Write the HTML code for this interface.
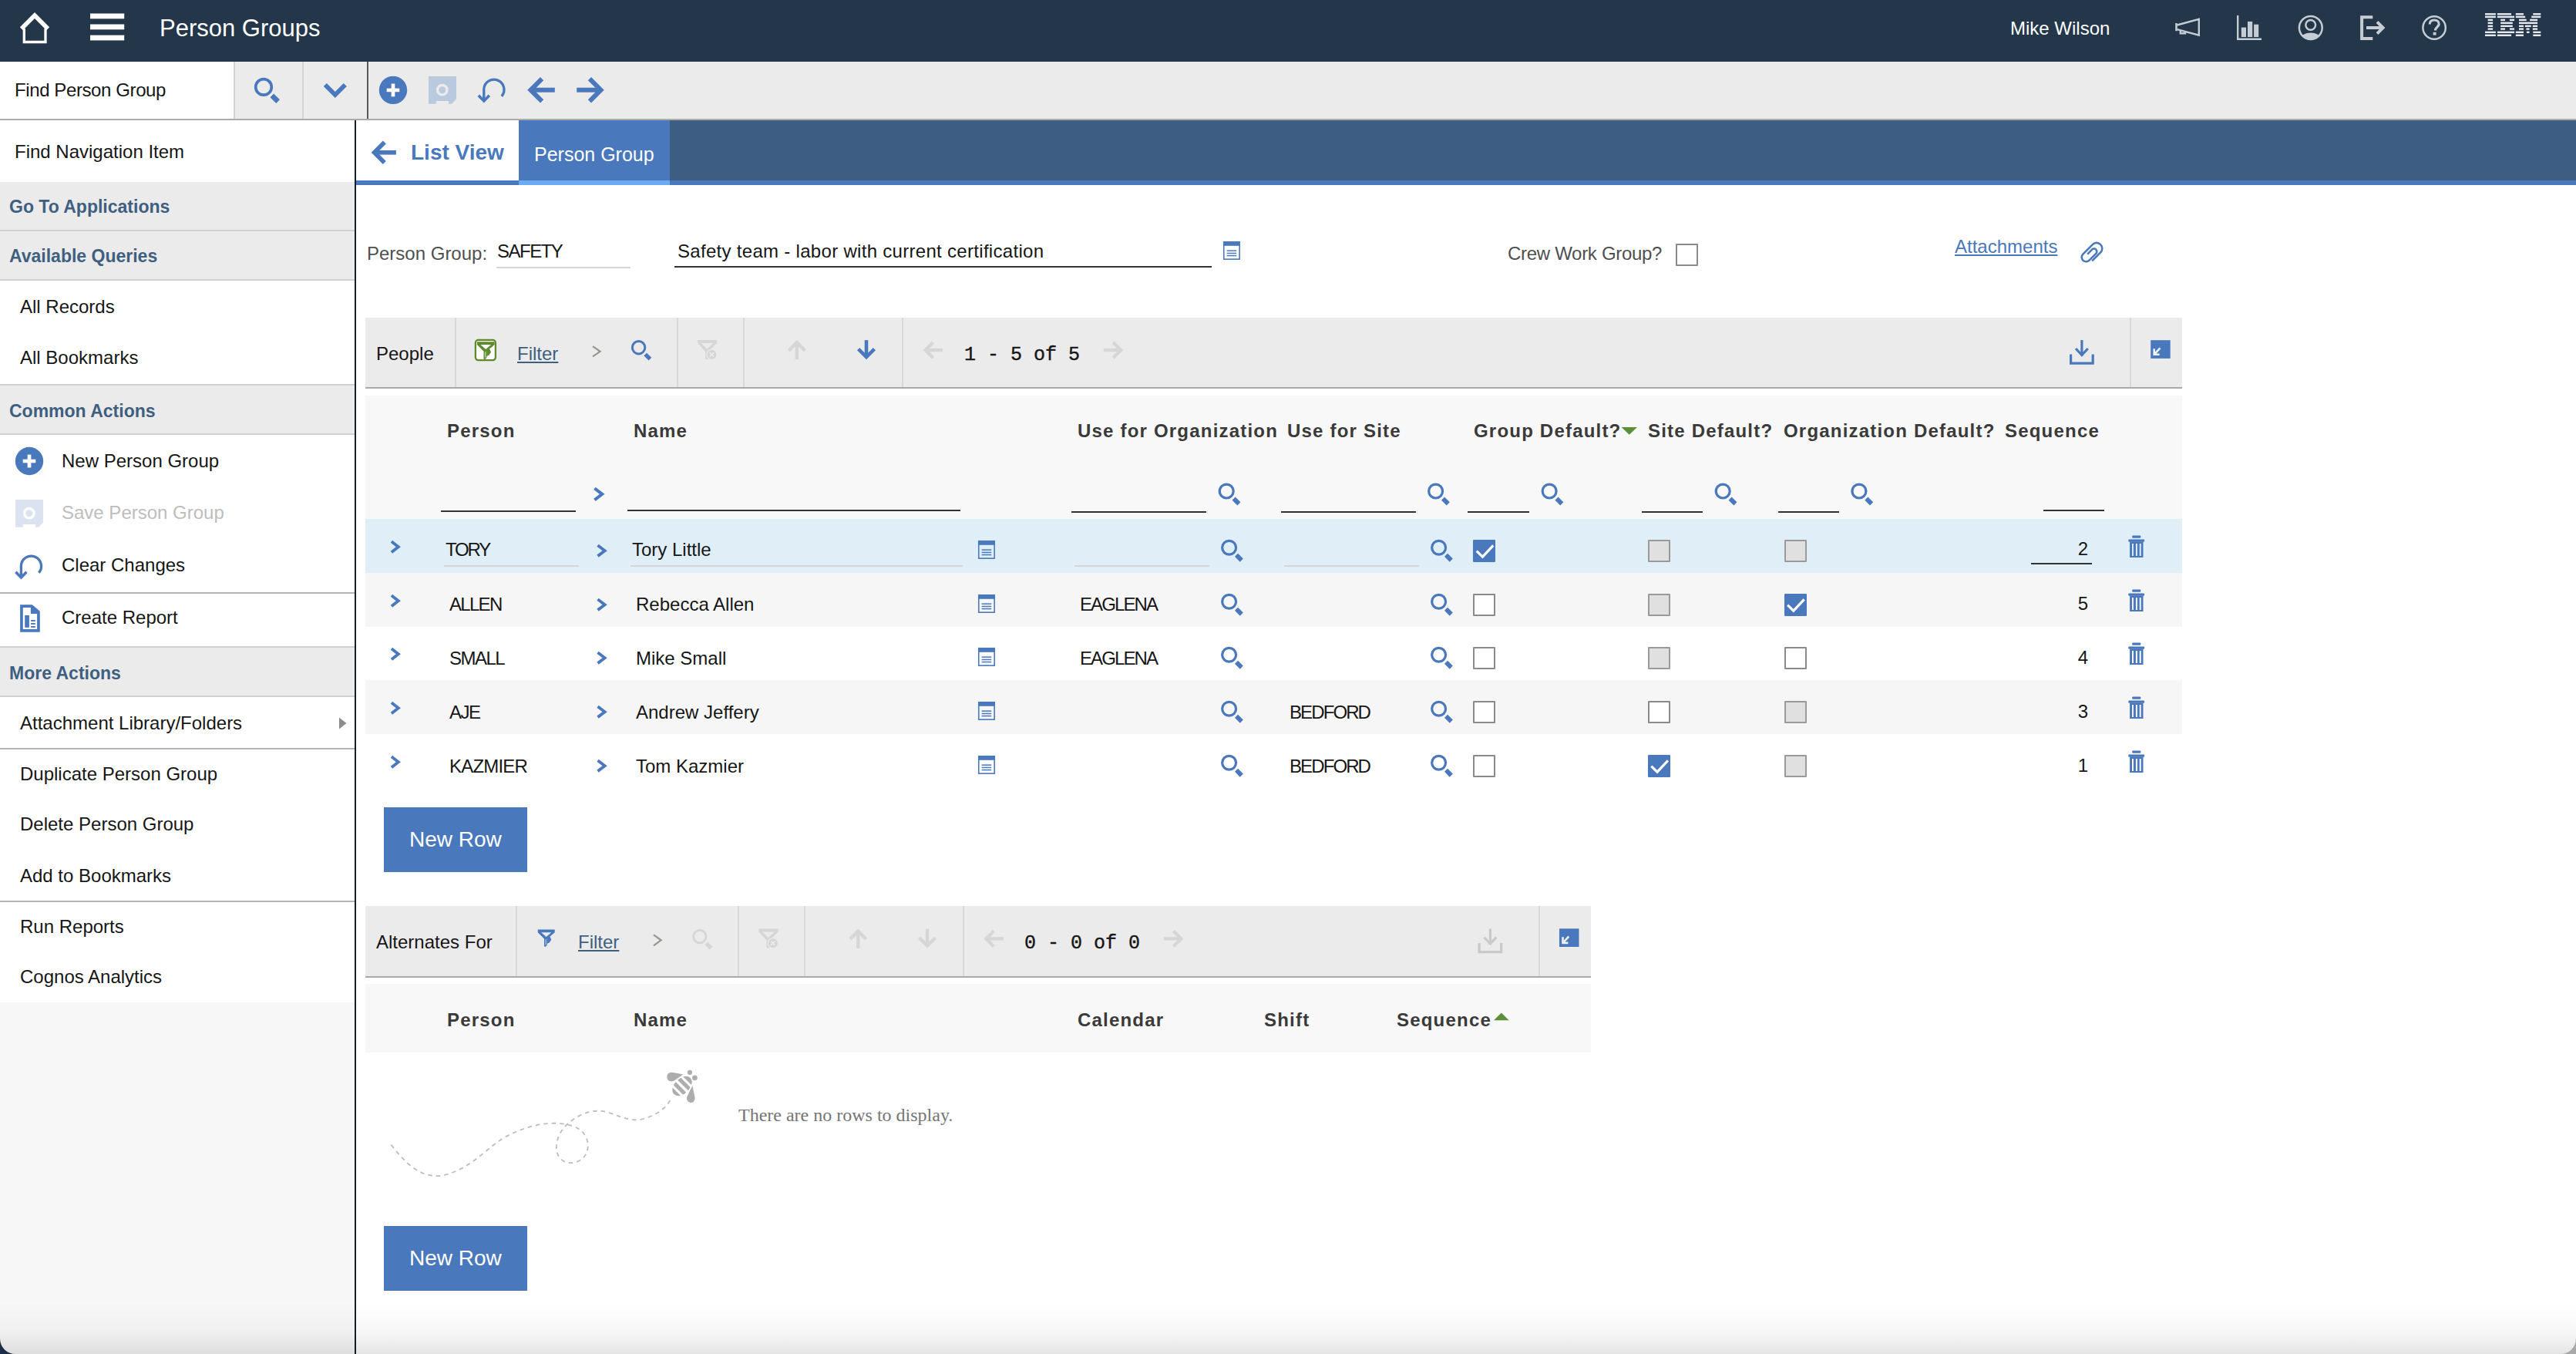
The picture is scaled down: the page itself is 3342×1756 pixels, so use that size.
<!DOCTYPE html>
<html><head><meta charset="utf-8">
<style>
html,body{margin:0;padding:0;}
body{width:3342px;height:1756px;position:relative;overflow:hidden;background:#fff;font-family:"Liberation Sans",sans-serif;}
.a{position:absolute;}
.t{position:absolute;line-height:1;white-space:nowrap;font-size:24px;color:#161616;}
.b{font-weight:700;}
.hl{font-weight:700;letter-spacing:1.2px;color:#3a3a3a;}
.sec{position:absolute;left:0;width:460px;background:#ebebeb;border-bottom:2px solid #d0d0d0;}
.sh{color:#3f5f80;font-weight:700;font-size:23px;}
.ln{position:absolute;left:0;width:460px;height:2px;background:#b4b4b4;}
.ul{position:absolute;height:2px;background:#333;}
.ulg{position:absolute;height:2px;background:#d6d6d6;}
.tb{position:absolute;background:#ebebeb;border-bottom:2px solid #a9a9a9;}
.sep{position:absolute;width:2px;background:#d8d8d8;}
.cb{position:absolute;width:25px;height:25px;border:2px solid #8a8a8a;background:#fff;border-radius:1px;}
.cbd{background:#e0e0e0;border-color:#9a9a9a;}
.cbc{background:#4a78bd;border-color:#4a78bd;}
svg{position:absolute;overflow:visible;}
.btn{position:absolute;background:#4a78bd;}
</style></head><body>

<!-- HEADER -->
<div class="a" style="left:0;top:0;width:3342px;height:80px;background:#243649;"></div>
<div class="t" style="left:207px;top:21px;font-size:31px;color:#fff;">Person Groups</div>
<div class="t" style="left:2608px;top:25px;color:#fff;">Mike Wilson</div>

<!-- TOOLBAR -->
<div class="a" style="left:0;top:80px;width:3342px;height:74px;background:#ebebeb;border-bottom:2px solid #ababab;"></div>
<div class="a" style="left:0;top:80px;width:303px;height:74px;background:#fff;"></div>
<div class="t" style="left:19px;top:105px;letter-spacing:-0.4px;">Find Person Group</div>
<div class="a" style="left:303px;top:80px;width:2px;height:74px;background:#d4d4d4;"></div>
<div class="a" style="left:392px;top:80px;width:2px;height:74px;background:#d4d4d4;"></div>
<div class="a" style="left:476px;top:80px;width:2px;height:74px;background:#5a5a5a;"></div>

<!-- SIDEBAR -->
<div class="a" style="left:0;top:156px;width:460px;height:1600px;background:#f7f7f7;"></div>
<div class="a" style="left:0;top:156px;width:460px;height:1144px;background:#fff;"></div>
<div class="a" style="left:460px;top:156px;width:2px;height:1600px;background:#102030;"></div>
<div class="t" style="left:19px;top:185px;">Find Navigation Item</div>
<div class="sec" style="top:236px;height:62px;"></div>
<div class="t sh" style="left:12px;top:257px;">Go To Applications</div>
<div class="sec" style="top:300px;height:62px;"></div>
<div class="t sh" style="left:12px;top:321px;">Available Queries</div>
<div class="t" style="left:26px;top:386px;">All Records</div>
<div class="t" style="left:26px;top:452px;">All Bookmarks</div>
<div class="sec" style="top:498px;height:62px;border-top:2px solid #d0d0d0;top:498px;"></div>
<div class="t sh" style="left:12px;top:522px;">Common Actions</div>
<div class="t" style="left:80px;top:586px;">New Person Group</div>
<div class="t" style="left:80px;top:653px;color:#bdbdbd;">Save Person Group</div>
<div class="t" style="left:80px;top:721px;">Clear Changes</div>
<div class="ln" style="top:768px;"></div>
<div class="t" style="left:80px;top:789px;">Create Report</div>
<div class="sec" style="top:838px;height:62px;border-top:2px solid #d0d0d0;"></div>
<div class="t sh" style="left:12px;top:862px;">More Actions</div>
<div class="t" style="left:26px;top:926px;">Attachment Library/Folders</div>
<div class="ln" style="top:970px;"></div>
<div class="t" style="left:26px;top:992px;">Duplicate Person Group</div>
<div class="t" style="left:26px;top:1057px;">Delete Person Group</div>
<div class="t" style="left:26px;top:1124px;">Add to Bookmarks</div>
<div class="ln" style="top:1168px;"></div>
<div class="t" style="left:26px;top:1190px;">Run Reports</div>
<div class="t" style="left:26px;top:1255px;">Cognos Analytics</div>

<!-- TAB BAR -->
<div class="a" style="left:462px;top:156px;width:2880px;height:78px;background:#3d5e82;"></div>
<div class="a" style="left:462px;top:156px;width:211px;height:78px;background:#fff;"></div>
<div class="a" style="left:673px;top:156px;width:196px;height:78px;background:#4a78bd;"></div>
<div class="a" style="left:462px;top:234px;width:2880px;height:6px;background:#4a78bd;"></div>
<div class="a" style="left:673px;top:234px;width:196px;height:6px;background:#6aabf3;"></div>
<div class="t b" style="left:533px;top:184px;font-size:28px;color:#4a78bd;">List View</div>
<div class="t" style="left:693px;top:188px;font-size:25px;color:#fff;">Person Group</div>

<!-- CONTENT -->

<!-- FORM ROW -->
<div class="t" style="left:476px;top:317px;color:#4f4f4f;">Person Group:</div>
<div class="t" style="left:645px;top:314px;letter-spacing:-1.5px;">SAFETY</div>
<div class="ulg" style="left:644px;top:346px;width:174px;"></div>
<div class="t" style="left:879px;top:314px;letter-spacing:0.3px;">Safety team - labor with current certification</div>
<div class="ul" style="left:875px;top:345px;width:697px;"></div>
<div class="t" style="left:1956px;top:317px;color:#4f4f4f;letter-spacing:-0.3px;">Crew Work Group?</div>
<div class="cb" style="left:2174px;top:316px;"></div>
<div class="t" style="left:2536px;top:308px;color:#4a78bd;text-decoration:underline;">Attachments</div>

<!-- PEOPLE TOOLBAR -->
<div class="tb" style="left:474px;top:412px;width:2357px;height:90px;"></div>
<div class="sep" style="left:590px;top:412px;height:90px;"></div>
<div class="sep" style="left:878px;top:412px;height:90px;"></div>
<div class="sep" style="left:964px;top:412px;height:90px;"></div>
<div class="sep" style="left:1170px;top:412px;height:90px;"></div>
<div class="sep" style="left:2763px;top:412px;height:90px;"></div>
<div class="t" style="left:488px;top:447px;">People</div>
<div class="t" style="left:671px;top:447px;color:#3f5f80;text-decoration:underline;">Filter</div>
<div class="t" style="left:1251px;top:448px;font-family:'Liberation Mono',monospace;font-size:25px;-webkit-text-stroke:0.4px #161616;">1 - 5 of 5</div>

<!-- PEOPLE HEADER -->
<div class="a" style="left:474px;top:513px;width:2357px;height:160px;background:#f8f8f8;"></div>
<div class="t hl" style="left:580px;top:547px;">Person</div>
<div class="t hl" style="left:822px;top:547px;">Name</div>
<div class="t hl" style="left:1398px;top:547px;">Use for Organization</div>
<div class="t hl" style="left:1670px;top:547px;">Use for Site</div>
<div class="t hl" style="left:1912px;top:547px;">Group Default?</div>
<div class="t hl" style="left:2138px;top:547px;">Site Default?</div>
<div class="t hl" style="left:2314px;top:547px;">Organization Default?</div>
<div class="t hl" style="left:2601px;top:547px;">Sequence</div>
<div class="ul" style="left:572px;top:662px;width:175px;"></div>
<div class="ul" style="left:814px;top:661px;width:432px;"></div>
<div class="ul" style="left:1390px;top:663px;width:175px;"></div>
<div class="ul" style="left:1662px;top:663px;width:175px;"></div>
<div class="ul" style="left:1904px;top:663px;width:80px;"></div>
<div class="ul" style="left:2130px;top:663px;width:79px;"></div>
<div class="ul" style="left:2307px;top:663px;width:79px;"></div>
<div class="ul" style="left:2651px;top:661px;width:79px;"></div>

<!-- ROWS -->
<div class="a" style="left:474px;top:673px;width:2357px;height:70px;background:#e0eff7;"></div>
<div class="a" style="left:474px;top:743px;width:2357px;height:70px;background:#f6f6f6;"></div>
<div class="a" style="left:474px;top:882px;width:2357px;height:70px;background:#f6f6f6;"></div>
<div class="t" style="left:578px;top:701px;letter-spacing:-2.2px;">TORY</div>
<div class="t" style="left:820px;top:701px;">Tory Little</div>
<div class="cb cbc" style="left:1911px;top:700px;"></div>
<div class="cb cbd" style="left:2138px;top:700px;"></div>
<div class="cb cbd" style="left:2315px;top:700px;"></div>
<div class="t" style="left:2600px;width:109px;text-align:right;top:700px;">2</div>
<div class="ulg" style="left:576px;top:733px;width:175px;"></div>
<div class="ulg" style="left:818px;top:733px;width:431px;"></div>
<div class="ulg" style="left:1394px;top:733px;width:175px;"></div>
<div class="ulg" style="left:1666px;top:733px;width:175px;"></div>
<div class="ul" style="left:2635px;top:730px;width:79px;"></div>
<div class="t" style="left:583px;top:772px;letter-spacing:-1.7px;">ALLEN</div>
<div class="t" style="left:825px;top:772px;">Rebecca Allen</div>
<div class="t" style="left:1401px;top:772px;letter-spacing:-1.9px;">EAGLENA</div>
<div class="cb" style="left:1911px;top:770px;"></div>
<div class="cb cbd" style="left:2138px;top:770px;"></div>
<div class="cb cbc" style="left:2315px;top:770px;"></div>
<div class="t" style="left:2600px;width:109px;text-align:right;top:771px;">5</div>
<div class="t" style="left:583px;top:842px;letter-spacing:-1.5px;">SMALL</div>
<div class="t" style="left:825px;top:842px;">Mike Small</div>
<div class="t" style="left:1401px;top:842px;letter-spacing:-1.9px;">EAGLENA</div>
<div class="cb" style="left:1911px;top:839px;"></div>
<div class="cb cbd" style="left:2138px;top:839px;"></div>
<div class="cb" style="left:2315px;top:839px;"></div>
<div class="t" style="left:2600px;width:109px;text-align:right;top:841px;">4</div>
<div class="t" style="left:583px;top:912px;letter-spacing:-1.5px;">AJE</div>
<div class="t" style="left:825px;top:912px;">Andrew Jeffery</div>
<div class="t" style="left:1673px;top:912px;letter-spacing:-1.9px;">BEDFORD</div>
<div class="cb" style="left:1911px;top:909px;"></div>
<div class="cb" style="left:2138px;top:909px;"></div>
<div class="cb cbd" style="left:2315px;top:909px;"></div>
<div class="t" style="left:2600px;width:109px;text-align:right;top:911px;">3</div>
<div class="t" style="left:583px;top:982px;letter-spacing:-0.8px;">KAZMIER</div>
<div class="t" style="left:825px;top:982px;">Tom Kazmier</div>
<div class="t" style="left:1673px;top:982px;letter-spacing:-1.9px;">BEDFORD</div>
<div class="cb" style="left:1911px;top:979px;"></div>
<div class="cb cbc" style="left:2138px;top:979px;"></div>
<div class="cb cbd" style="left:2315px;top:979px;"></div>
<div class="t" style="left:2600px;width:109px;text-align:right;top:981px;">1</div>

<div class="btn" style="left:498px;top:1047px;width:186px;height:84px;"></div>
<div class="t" style="left:531px;top:1075px;font-size:28px;color:#fff;">New Row</div>

<!-- ALTERNATES TOOLBAR -->
<div class="tb" style="left:474px;top:1175px;width:1590px;height:91px;"></div>
<div class="sep" style="left:669px;top:1175px;height:91px;"></div>
<div class="sep" style="left:957px;top:1175px;height:91px;"></div>
<div class="sep" style="left:1043px;top:1175px;height:91px;"></div>
<div class="sep" style="left:1249px;top:1175px;height:91px;"></div>
<div class="sep" style="left:1996px;top:1175px;height:91px;"></div>
<div class="t" style="left:488px;top:1210px;">Alternates For</div>
<div class="t" style="left:750px;top:1210px;color:#3f5f80;text-decoration:underline;">Filter</div>
<div class="t" style="left:1329px;top:1211px;font-family:'Liberation Mono',monospace;font-size:25px;-webkit-text-stroke:0.4px #161616;">0 - 0 of 0</div>

<!-- ALTERNATES HEADER -->
<div class="a" style="left:474px;top:1276px;width:1590px;height:89px;background:#f8f8f8;"></div>
<div class="t hl" style="left:580px;top:1311px;">Person</div>
<div class="t hl" style="left:822px;top:1311px;">Name</div>
<div class="t hl" style="left:1398px;top:1311px;">Calendar</div>
<div class="t hl" style="left:1640px;top:1311px;">Shift</div>
<div class="t hl" style="left:1812px;top:1311px;">Sequence</div>

<div class="t" style="left:958px;top:1434px;font-family:'Liberation Serif',serif;color:#757575;">There are no rows to display.</div>

<div class="btn" style="left:498px;top:1590px;width:186px;height:84px;"></div>
<div class="t" style="left:531px;top:1618px;font-size:28px;color:#fff;">New Row</div>


<!-- BOTTOM -->
<div class="a" style="left:0;top:1690px;width:3342px;height:66px;background:linear-gradient(to bottom,rgba(0,0,0,0),rgba(0,0,0,0.035) 60%,rgba(0,0,0,0.1));"></div>
<svg class="a" style="left:0;top:1726px" width="30" height="30" viewBox="0 0 30 30"><path d="M0,10 A20,20 0 0 0 20,30 H0 Z" fill="#1b2f4a"/></svg>
<svg class="a" style="left:3312px;top:1726px" width="30" height="30" viewBox="0 0 30 30"><path d="M30,10 A20,20 0 0 1 10,30 H30 Z" fill="#a9a9a9"/></svg>
<!-- ICONS --><svg class="a" style="left:0;top:0" width="3342" height="1756" viewBox="0 0 3342 1756"><g fill="none" stroke="#fff"><polyline points="27.8,37.2 45,20 62.2,37.2" stroke-width="5.6" stroke-linejoin="miter"/><path d="M31.3,37 V54.5 H59 V37" stroke-width="3.3"/></g>
<g fill="#fff"><rect x="117" y="17.5" width="44.2" height="6.8"/><rect x="117" y="31.5" width="44.2" height="6.8"/><rect x="117" y="45.6" width="44.2" height="6.8"/></g>
<g fill="none" stroke="#c6ccd4" stroke-width="2.4"><rect x="2822.2" y="30" width="2.6" height="10.2" fill="#c6ccd4" stroke="none"/><path d="M2824.5,32.5 L2852.8,24.8 V45.6 L2824.5,38.2"/><path d="M2828.8,39.5 V43.2 H2835 V41"/></g>
<g fill="#c6ccd4"><path d="M2903.2,20 V50.8 H2934" fill="none" stroke="#c6ccd4" stroke-width="2.4"/><rect x="2907.8" y="35.6" width="6.2" height="12.4"/><rect x="2916" y="27.9" width="6.2" height="20.1"/><rect x="2924.1" y="31.7" width="6.1" height="16.3"/></g>
<defs><clipPath id="uc"><circle cx="2997.8" cy="36" r="14.5"/></clipPath></defs><g fill="none" stroke="#c6ccd4" stroke-width="2.5"><circle cx="2997.8" cy="36" r="14.9"/><circle cx="2997.7" cy="32.3" r="6.4"/></g><ellipse cx="2997.8" cy="50" rx="13" ry="7.6" fill="#c6ccd4" clip-path="url(#uc)"/>
<g fill="none" stroke="#c6ccd4" stroke-width="4"><path d="M3078.3,22.2 H3064.1 V49.9 H3078.3"/><path d="M3070,36 H3091"/><polyline points="3084,28.3 3091.6,36 3084,43.7" stroke-linejoin="miter"/></g>
<circle cx="3158.1" cy="36" r="14.7" fill="none" stroke="#c6ccd4" stroke-width="2.5"/><path d="M3152.2,31.5 C3152.2,27.8 3154.8,26 3158.2,26 C3161.8,26 3164.2,28.2 3164.2,31.2 C3164.2,34.6 3159.4,35.4 3159.4,39.6" fill="none" stroke="#c6ccd4" stroke-width="3.2"/><rect x="3156.6" y="41.8" width="4" height="3.8" fill="#c6ccd4"/>
<g fill="#e6e9ed"><rect x="3224.0" y="17.1" width="13.9" height="2.4"/><rect x="3239.9" y="17.1" width="18.1" height="2.4"/><rect x="3263.8" y="17.1" width="10.2" height="2.4"/><rect x="3286.3" y="17.1" width="10.0" height="2.4"/><rect x="3224.0" y="20.7" width="13.9" height="2.4"/><rect x="3239.9" y="20.7" width="22.1" height="2.4"/><rect x="3263.8" y="20.7" width="12.3" height="2.4"/><rect x="3284.2" y="20.7" width="12.1" height="2.4"/><rect x="3227.6" y="24.7" width="6.5" height="2.4"/><rect x="3244.2" y="24.7" width="5.8" height="2.4"/><rect x="3255.9" y="24.7" width="6.1" height="2.4"/><rect x="3268.0" y="24.7" width="9.7" height="2.4"/><rect x="3282.1" y="24.7" width="10.0" height="2.4"/><rect x="3227.6" y="28.6" width="6.5" height="2.4"/><rect x="3244.2" y="28.6" width="15.6" height="2.4"/><rect x="3268.0" y="28.6" width="24.1" height="2.4"/><rect x="3227.6" y="32.6" width="6.5" height="2.4"/><rect x="3244.2" y="32.6" width="15.6" height="2.4"/><rect x="3268.0" y="32.6" width="6.0" height="2.4"/><rect x="3275.8" y="32.6" width="7.9" height="2.4"/><rect x="3285.8" y="32.6" width="6.3" height="2.4"/><rect x="3227.6" y="36.4" width="6.5" height="2.4"/><rect x="3244.2" y="36.4" width="5.8" height="2.4"/><rect x="3255.9" y="36.4" width="6.1" height="2.4"/><rect x="3268.0" y="36.4" width="6.0" height="2.4"/><rect x="3277.4" y="36.4" width="4.2" height="2.4"/><rect x="3285.8" y="36.4" width="6.3" height="2.4"/><rect x="3224.0" y="40.6" width="13.9" height="2.4"/><rect x="3239.9" y="40.6" width="22.1" height="2.4"/><rect x="3263.8" y="40.6" width="10.2" height="2.4"/><rect x="3277.9" y="40.6" width="3.7" height="2.4"/><rect x="3286.3" y="40.6" width="10.0" height="2.4"/><rect x="3224.0" y="44.6" width="13.9" height="2.4"/><rect x="3239.9" y="44.6" width="18.1" height="2.4"/><rect x="3263.8" y="44.6" width="10.2" height="2.4"/><rect x="3286.3" y="44.6" width="10.0" height="2.4"/></g>
<g transform="translate(329.8,100.9) scale(1.0)" fill="none" stroke="#4a78bd"><circle cx="12.2" cy="12" r="10.3" stroke-width="3.7"/><line x1="23" y1="23" x2="30.8" y2="30.8" stroke-width="6.6"/></g>
<polyline points="421.8,110 434.8,123 447.8,110" fill="none" stroke="#4a78bd" stroke-width="5.8"/>
<circle cx="510" cy="116.9" r="18.2" fill="#4a78bd"/><rect x="501.7" y="114.60000000000001" width="16.6" height="4.6" fill="#fff"/><rect x="507.65" y="108.5" width="4.7" height="16.8" fill="#fff"/>
<path d="M556,99 H592 V128.5 L586,134.7 H582 V131 H565.7 V134.7 H556 Z" fill="#bacade"/><circle cx="573.8" cy="116.7" r="6.2" fill="none" stroke="#ebebeb" stroke-width="3.4"/>
<g transform="translate(620,100)" fill="none" stroke="#4a78bd" stroke-width="3.3"><path d="M30.8,24.8 A13.1,13.1 0 1 0 7.8,15.5 V31"/><polyline points="0.8,23.8 7.8,31 14.8,23.8" stroke-width="3.6"/></g>
<g fill="none" stroke="#4a78bd" stroke-width="6"><line x1="688.5" y1="116.7" x2="719.8" y2="116.7"/><polyline points="703.1,102.10000000000001 688.5,116.7 703.1,131.3"/></g>
<g fill="none" stroke="#4a78bd" stroke-width="6"><line x1="748.2" y1="116.7" x2="779.5" y2="116.7"/><polyline points="764.9,102.10000000000001 779.5,116.7 764.9,131.3"/></g>
<g fill="none" stroke="#4a78bd" stroke-width="5.6"><line x1="485.62" y1="197.8" x2="513.9" y2="197.8"/><polyline points="498.82,184.60000000000002 485.62,197.8 498.82,211.0"/></g>
<circle cx="38" cy="598" r="18.2" fill="#4a78bd"/><rect x="29.7" y="595.7" width="16.6" height="4.6" fill="#fff"/><rect x="35.65" y="589.6" width="4.7" height="16.8" fill="#fff"/>
<path d="M20,648 H56 V677.5 L50,683.7 H46 V680 H29.7 V683.7 H20 Z" fill="#dae3ef"/><circle cx="37.8" cy="665.7" r="6.2" fill="none" stroke="#fff" stroke-width="3.4"/>
<g transform="translate(19.6,718)" fill="none" stroke="#4a78bd" stroke-width="3.3"><path d="M30.8,24.8 A13.1,13.1 0 1 0 7.8,15.5 V31"/><polyline points="0.8,23.8 7.8,31 14.8,23.8" stroke-width="3.6"/></g>
<g fill="#4a78bd"><path d="M26.1,784.2 H41.8 L51.8,792.7 V819.7 H26.1 Z M29.8,788 V816 H48.1 V796 H39.9 V788 Z" fill-rule="evenodd"/><rect x="32.2" y="798" width="5.7" height="15.8"/><rect x="40.1" y="804" width="5.7" height="1.9"/><rect x="40.1" y="808" width="5.7" height="1.9"/><rect x="40.1" y="812" width="5.7" height="1.9"/></g>
<polygon points="440,930.5 449.5,938 440,945.5" fill="#8c8c8c"/>
<g transform="translate(1587,313)"><rect x="0.75" y="0.75" width="20.4" height="22.4" fill="none" stroke="#4a78bd" stroke-width="1.6"/><rect x="0" y="0" width="21.9" height="5.8" fill="#4a78bd"/><g fill="#4a78bd"><rect x="4.6" y="11.4" width="12.6" height="1.5"/><rect x="4.6" y="14.7" width="12.6" height="1.5"/><rect x="4.6" y="17.8" width="12.6" height="1.5"/></g></g>
<path d="M7,15 V0 A7,7 0 0 0 -7,0 V17 A5.5,5.5 0 0 0 4,17 V5 A3.5,3.5 0 0 0 -3,5 V13" fill="none" stroke="#4a78bd" stroke-width="2.5" transform="translate(2720,322.2) rotate(45) scale(1.04)"/>
<rect x="616.9" y="440.9" width="26" height="26.3" rx="3.6" fill="#fff" stroke="#5e8c2c" stroke-width="2.3"/>
<g transform="translate(618.9,443.2) scale(1.03)" fill="#5e8c2c"><path d="M0,0 H22 V3.6 L12,12.2 V20.5 L9.6,22.4 L8.3,21.6 V12 L0,3.6 Z M4.4,3.6 L11,9.4 L17.6,3.6 Z" fill-rule="evenodd"/><rect x="9.7" y="12.6" width="1.1" height="7.2" fill="#fff" opacity="0.7"/><path d="M12,10.6 L15.6,8.8 L17.6,13.2 L15.2,16.6 L12,18.4 Z"/></g>
<polyline points="769,449.2 778.6,455.8 769,462.4" fill="none" stroke="#96968a" stroke-width="2.2"/>
<g transform="translate(818.8,441.1) scale(0.8)" fill="none" stroke="#4a78bd"><circle cx="12.2" cy="12" r="10.3" stroke-width="3.7"/><line x1="23" y1="23" x2="30.8" y2="30.8" stroke-width="6.6"/></g>
<g transform="translate(905.1,441.1)"><path d="M0,0 H25 V4 L14,15 V25 L10,25 V15 L0,4 Z M4.5,4 L12,11.5 L20.5,4 Z" fill="#d6d6d6" fill-rule="evenodd"/><circle cx="18.3" cy="18.7" r="6.6" fill="#d6d6d6" stroke="#ebebeb" stroke-width="1.2"/><path d="M15.6,16 L21,21.4 M21,16 L15.6,21.4" stroke="#ebebeb" stroke-width="1.6"/></g>
<g fill="none" stroke="#d6d6d6" stroke-width="4.4"><line x1="1033.8" y1="444.18" x2="1033.8" y2="466.3"/><polyline points="1023.4,454.58 1033.8,444.18 1044.2,454.58"/></g>
<g fill="none" stroke="#4a78bd" stroke-width="4.6"><line x1="1124" y1="441.1" x2="1124" y2="463.08"/><polyline points="1113.6,452.68 1124,463.08 1134.4,452.68"/></g>
<g fill="none" stroke="#d6d6d6" stroke-width="4.3"><line x1="1200.51" y1="454" x2="1222.9" y2="454"/><polyline points="1210.51,444 1200.51,454 1210.51,464"/></g>
<g fill="none" stroke="#d6d6d6" stroke-width="4.3"><line x1="1431.8" y1="454" x2="1454.19" y2="454"/><polyline points="1444.19,444 1454.19,454 1444.19,464"/></g>
<g transform="translate(2685,441)" fill="none" stroke="#4a78bd" stroke-width="3.2"><path d="M1.6,18.5 V30.2 H30.2 V18.5"/><line x1="15.9" y1="0" x2="15.9" y2="20.5"/><polyline points="8,11 15.9,19.5 23.8,11"/></g>
<rect x="2790.2" y="441.2" width="25.5" height="23.7" fill="#4a78bd"/><g fill="none" stroke="#eef1f6" stroke-width="2.6"><path d="M2794.7,452.2 V459.8 H2801.6"/><line x1="2795.0" y1="459.5" x2="2802.3999999999996" y2="451.4"/></g>
<polygon points="2103.6,554 2124,554 2113.8,563.7" fill="#5b8f3a"/>
<polyline points="771.4,633.4 781.2,640.85 771.4,648.3000000000001" fill="none" stroke="#4a78bd" stroke-width="4"/>
<g transform="translate(1580.6,626.6) scale(0.87)" fill="none" stroke="#4a78bd"><circle cx="12.2" cy="12" r="10.3" stroke-width="3.7"/><line x1="23" y1="23" x2="30.8" y2="30.8" stroke-width="6.6"/></g>
<g transform="translate(1852,626.6) scale(0.87)" fill="none" stroke="#4a78bd"><circle cx="12.2" cy="12" r="10.3" stroke-width="3.7"/><line x1="23" y1="23" x2="30.8" y2="30.8" stroke-width="6.6"/></g>
<g transform="translate(1999.5,626.6) scale(0.87)" fill="none" stroke="#4a78bd"><circle cx="12.2" cy="12" r="10.3" stroke-width="3.7"/><line x1="23" y1="23" x2="30.8" y2="30.8" stroke-width="6.6"/></g>
<g transform="translate(2224.6,626.6) scale(0.87)" fill="none" stroke="#4a78bd"><circle cx="12.2" cy="12" r="10.3" stroke-width="3.7"/><line x1="23" y1="23" x2="30.8" y2="30.8" stroke-width="6.6"/></g>
<g transform="translate(2401.3,626.6) scale(0.87)" fill="none" stroke="#4a78bd"><circle cx="12.2" cy="12" r="10.3" stroke-width="3.7"/><line x1="23" y1="23" x2="30.8" y2="30.8" stroke-width="6.6"/></g>
<polyline points="507.9,702.28 516.84,709.3 507.9,716.32" fill="none" stroke="#4a78bd" stroke-width="3.8"/>
<polyline points="775.5,707.28 784.6400000000001,714.2 775.5,721.12" fill="none" stroke="#4a78bd" stroke-width="3.8"/>
<g transform="translate(1269,701)"><rect x="0.75" y="0.75" width="20.4" height="22.4" fill="none" stroke="#4a78bd" stroke-width="1.6"/><rect x="0" y="0" width="21.9" height="5.8" fill="#4a78bd"/><g fill="#4a78bd"><rect x="4.6" y="11.4" width="12.6" height="1.5"/><rect x="4.6" y="14.7" width="12.6" height="1.5"/><rect x="4.6" y="17.8" width="12.6" height="1.5"/></g></g>
<g transform="translate(1584,699.8) scale(0.87)" fill="none" stroke="#4a78bd"><circle cx="12.2" cy="12" r="10.3" stroke-width="3.7"/><line x1="23" y1="23" x2="30.8" y2="30.8" stroke-width="6.6"/></g>
<g transform="translate(1856,699.8) scale(0.87)" fill="none" stroke="#4a78bd"><circle cx="12.2" cy="12" r="10.3" stroke-width="3.7"/><line x1="23" y1="23" x2="30.8" y2="30.8" stroke-width="6.6"/></g>
<g fill="#4a78bd" transform="translate(2761.3,694.4)"><rect x="4.9" y="0" width="11.1" height="3.3" rx="1"/><rect x="0" y="5" width="20.8" height="3.3" rx="1"/><path d="M1.8,8 H19.2 V28.6 H1.8 Z M4.7,10.6 V26.5 H6.6 V10.6 Z M9.6,10.6 V26.5 H11.6 V10.6 Z M14.4,10.6 V26.5 H16.4 V10.6 Z" fill-rule="evenodd"/></g>
<polyline points="507.9,772.28 516.84,779.3 507.9,786.32" fill="none" stroke="#4a78bd" stroke-width="3.8"/>
<polyline points="775.5,777.28 784.6400000000001,784.2 775.5,791.12" fill="none" stroke="#4a78bd" stroke-width="3.8"/>
<g transform="translate(1269,771)"><rect x="0.75" y="0.75" width="20.4" height="22.4" fill="none" stroke="#4a78bd" stroke-width="1.6"/><rect x="0" y="0" width="21.9" height="5.8" fill="#4a78bd"/><g fill="#4a78bd"><rect x="4.6" y="11.4" width="12.6" height="1.5"/><rect x="4.6" y="14.7" width="12.6" height="1.5"/><rect x="4.6" y="17.8" width="12.6" height="1.5"/></g></g>
<g transform="translate(1584,769.8) scale(0.87)" fill="none" stroke="#4a78bd"><circle cx="12.2" cy="12" r="10.3" stroke-width="3.7"/><line x1="23" y1="23" x2="30.8" y2="30.8" stroke-width="6.6"/></g>
<g transform="translate(1856,769.8) scale(0.87)" fill="none" stroke="#4a78bd"><circle cx="12.2" cy="12" r="10.3" stroke-width="3.7"/><line x1="23" y1="23" x2="30.8" y2="30.8" stroke-width="6.6"/></g>
<g fill="#4a78bd" transform="translate(2761.3,764.4)"><rect x="4.9" y="0" width="11.1" height="3.3" rx="1"/><rect x="0" y="5" width="20.8" height="3.3" rx="1"/><path d="M1.8,8 H19.2 V28.6 H1.8 Z M4.7,10.6 V26.5 H6.6 V10.6 Z M9.6,10.6 V26.5 H11.6 V10.6 Z M14.4,10.6 V26.5 H16.4 V10.6 Z" fill-rule="evenodd"/></g>
<polyline points="507.9,841.28 516.84,848.3 507.9,855.32" fill="none" stroke="#4a78bd" stroke-width="3.8"/>
<polyline points="775.5,846.28 784.6400000000001,853.2 775.5,860.12" fill="none" stroke="#4a78bd" stroke-width="3.8"/>
<g transform="translate(1269,840)"><rect x="0.75" y="0.75" width="20.4" height="22.4" fill="none" stroke="#4a78bd" stroke-width="1.6"/><rect x="0" y="0" width="21.9" height="5.8" fill="#4a78bd"/><g fill="#4a78bd"><rect x="4.6" y="11.4" width="12.6" height="1.5"/><rect x="4.6" y="14.7" width="12.6" height="1.5"/><rect x="4.6" y="17.8" width="12.6" height="1.5"/></g></g>
<g transform="translate(1584,838.8) scale(0.87)" fill="none" stroke="#4a78bd"><circle cx="12.2" cy="12" r="10.3" stroke-width="3.7"/><line x1="23" y1="23" x2="30.8" y2="30.8" stroke-width="6.6"/></g>
<g transform="translate(1856,838.8) scale(0.87)" fill="none" stroke="#4a78bd"><circle cx="12.2" cy="12" r="10.3" stroke-width="3.7"/><line x1="23" y1="23" x2="30.8" y2="30.8" stroke-width="6.6"/></g>
<g fill="#4a78bd" transform="translate(2761.3,833.4)"><rect x="4.9" y="0" width="11.1" height="3.3" rx="1"/><rect x="0" y="5" width="20.8" height="3.3" rx="1"/><path d="M1.8,8 H19.2 V28.6 H1.8 Z M4.7,10.6 V26.5 H6.6 V10.6 Z M9.6,10.6 V26.5 H11.6 V10.6 Z M14.4,10.6 V26.5 H16.4 V10.6 Z" fill-rule="evenodd"/></g>
<polyline points="507.9,911.28 516.84,918.3 507.9,925.32" fill="none" stroke="#4a78bd" stroke-width="3.8"/>
<polyline points="775.5,916.28 784.6400000000001,923.2 775.5,930.12" fill="none" stroke="#4a78bd" stroke-width="3.8"/>
<g transform="translate(1269,910)"><rect x="0.75" y="0.75" width="20.4" height="22.4" fill="none" stroke="#4a78bd" stroke-width="1.6"/><rect x="0" y="0" width="21.9" height="5.8" fill="#4a78bd"/><g fill="#4a78bd"><rect x="4.6" y="11.4" width="12.6" height="1.5"/><rect x="4.6" y="14.7" width="12.6" height="1.5"/><rect x="4.6" y="17.8" width="12.6" height="1.5"/></g></g>
<g transform="translate(1584,908.8) scale(0.87)" fill="none" stroke="#4a78bd"><circle cx="12.2" cy="12" r="10.3" stroke-width="3.7"/><line x1="23" y1="23" x2="30.8" y2="30.8" stroke-width="6.6"/></g>
<g transform="translate(1856,908.8) scale(0.87)" fill="none" stroke="#4a78bd"><circle cx="12.2" cy="12" r="10.3" stroke-width="3.7"/><line x1="23" y1="23" x2="30.8" y2="30.8" stroke-width="6.6"/></g>
<g fill="#4a78bd" transform="translate(2761.3,903.4)"><rect x="4.9" y="0" width="11.1" height="3.3" rx="1"/><rect x="0" y="5" width="20.8" height="3.3" rx="1"/><path d="M1.8,8 H19.2 V28.6 H1.8 Z M4.7,10.6 V26.5 H6.6 V10.6 Z M9.6,10.6 V26.5 H11.6 V10.6 Z M14.4,10.6 V26.5 H16.4 V10.6 Z" fill-rule="evenodd"/></g>
<polyline points="507.9,981.28 516.84,988.3 507.9,995.32" fill="none" stroke="#4a78bd" stroke-width="3.8"/>
<polyline points="775.5,986.28 784.6400000000001,993.2 775.5,1000.12" fill="none" stroke="#4a78bd" stroke-width="3.8"/>
<g transform="translate(1269,980)"><rect x="0.75" y="0.75" width="20.4" height="22.4" fill="none" stroke="#4a78bd" stroke-width="1.6"/><rect x="0" y="0" width="21.9" height="5.8" fill="#4a78bd"/><g fill="#4a78bd"><rect x="4.6" y="11.4" width="12.6" height="1.5"/><rect x="4.6" y="14.7" width="12.6" height="1.5"/><rect x="4.6" y="17.8" width="12.6" height="1.5"/></g></g>
<g transform="translate(1584,978.8) scale(0.87)" fill="none" stroke="#4a78bd"><circle cx="12.2" cy="12" r="10.3" stroke-width="3.7"/><line x1="23" y1="23" x2="30.8" y2="30.8" stroke-width="6.6"/></g>
<g transform="translate(1856,978.8) scale(0.87)" fill="none" stroke="#4a78bd"><circle cx="12.2" cy="12" r="10.3" stroke-width="3.7"/><line x1="23" y1="23" x2="30.8" y2="30.8" stroke-width="6.6"/></g>
<g fill="#4a78bd" transform="translate(2761.3,973.4)"><rect x="4.9" y="0" width="11.1" height="3.3" rx="1"/><rect x="0" y="5" width="20.8" height="3.3" rx="1"/><path d="M1.8,8 H19.2 V28.6 H1.8 Z M4.7,10.6 V26.5 H6.6 V10.6 Z M9.6,10.6 V26.5 H11.6 V10.6 Z M14.4,10.6 V26.5 H16.4 V10.6 Z" fill-rule="evenodd"/></g>
<polyline points="1915.6999999999998,714.6 1923.3999999999999,722.1 1937.3,707.4000000000001" fill="none" stroke="#fff" stroke-width="3.2"/>
<polyline points="2319.1,784.6 2326.8,792.1 2340.7,777.4000000000001" fill="none" stroke="#fff" stroke-width="3.2"/>
<polyline points="2142.2999999999997,993.6 2150.0,1001.1 2163.8999999999996,986.4000000000001" fill="none" stroke="#fff" stroke-width="3.2"/>
<g transform="translate(697.7,1205.6) scale(1.0)" fill="#4a78bd"><path d="M0,0 H22 V3.6 L12,12.2 V20.5 L9.6,22.4 L8.3,21.6 V12 L0,3.6 Z M4.4,3.6 L11,9.4 L17.6,3.6 Z" fill-rule="evenodd"/><rect x="9.7" y="12.6" width="1.1" height="7.2" fill="#ebebeb" opacity="0.7"/><path d="M12,10.6 L15.6,8.8 L17.6,13.2 L15.2,16.6 L12,18.4 Z"/></g>
<polyline points="848,1212.3 857.6,1219.3 848,1226.3" fill="none" stroke="#96968a" stroke-width="2.2"/>
<g transform="translate(898,1205) scale(0.8)" fill="none" stroke="#d6d6d6"><circle cx="12.2" cy="12" r="10.3" stroke-width="3.7"/><line x1="23" y1="23" x2="30.8" y2="30.8" stroke-width="6.6"/></g>
<g transform="translate(984.5,1204.5)"><path d="M0,0 H25 V4 L14,15 V25 L10,25 V15 L0,4 Z M4.5,4 L12,11.5 L20.5,4 Z" fill="#d6d6d6" fill-rule="evenodd"/><circle cx="18.3" cy="18.7" r="6.6" fill="#d6d6d6" stroke="#ebebeb" stroke-width="1.2"/><path d="M15.6,16 L21,21.4 M21,16 L15.6,21.4" stroke="#ebebeb" stroke-width="1.6"/></g>
<g fill="none" stroke="#d6d6d6" stroke-width="4.4"><line x1="1113.3" y1="1207.58" x2="1113.3" y2="1229.7"/><polyline points="1102.8999999999999,1217.98 1113.3,1207.58 1123.7,1217.98"/></g>
<g fill="none" stroke="#d6d6d6" stroke-width="4.4"><line x1="1203" y1="1204.5" x2="1203" y2="1226.6200000000001"/><polyline points="1192.6,1216.22 1203,1226.6200000000001 1213.4,1216.22"/></g>
<g fill="none" stroke="#d6d6d6" stroke-width="4.3"><line x1="1279.41" y1="1217.4" x2="1302.0" y2="1217.4"/><polyline points="1289.41,1207.4 1279.41,1217.4 1289.41,1227.4"/></g>
<g fill="none" stroke="#d6d6d6" stroke-width="4.3"><line x1="1509.8000000000002" y1="1217.4" x2="1532.39" y2="1217.4"/><polyline points="1522.39,1207.4 1532.39,1217.4 1522.39,1227.4"/></g>
<g transform="translate(1917.5,1204.5)" fill="none" stroke="#c9c9c9" stroke-width="3.2"><path d="M1.6,18.5 V30.2 H30.2 V18.5"/><line x1="15.9" y1="0" x2="15.9" y2="20.5"/><polyline points="8,11 15.9,19.5 23.8,11"/></g>
<rect x="2023" y="1204.3" width="25.5" height="23.7" fill="#4a78bd"/><g fill="none" stroke="#eef1f6" stroke-width="2.6"><path d="M2027.5,1215.3 V1222.8999999999999 H2034.4"/><line x1="2027.8" y1="1222.6" x2="2035.2" y2="1214.5"/></g>
<polygon points="1938,1323.3 1957.7,1323.3 1947.8,1313.4" fill="#5b8f3a"/>
<path d="M507.5,1484.5 C525,1508 545,1527 570,1525 C605,1520 625,1495 650,1478 C675,1462 715,1450 745,1461 C770,1471 768,1505 743,1508 C718,1510 715,1478 735,1459 C752,1443 772,1437 790,1443 C810,1450 822,1455 835,1451 C852,1446 865,1437 871,1424" fill="none" stroke="#bdbdbd" stroke-width="1.8" stroke-dasharray="5.5,5"/>
<g transform="translate(885,1408.5) rotate(-45)"><ellipse cx="0" cy="0" rx="15" ry="9.8" fill="#adadad"/><rect x="-10.2" y="-12" width="3" height="24" fill="#fff"/><rect x="-2.1" y="-12" width="3.4" height="24" fill="#fff"/><rect x="6.4" y="-12" width="3" height="24" fill="#fff"/></g><g fill="#adadad" stroke="#fff" stroke-width="1.6"><path d="M888.5,1393 L872,1390 C866.5,1389.3 863.6,1394 864.6,1398.5 C865.6,1402.8 870.5,1404.3 874.5,1402.6 Z"/><path d="M898.7,1405.5 L902.4,1423.5 C903,1428.8 899,1431.4 895.5,1430.8 C891,1430 889.2,1425.6 890.6,1421.8 Z"/></g><g fill="#adadad"><circle cx="894.9" cy="1390.8" r="3.1"/><circle cx="901.4" cy="1397.8" r="3.4"/></g></svg><!-- /ICONS -->
</body></html>
